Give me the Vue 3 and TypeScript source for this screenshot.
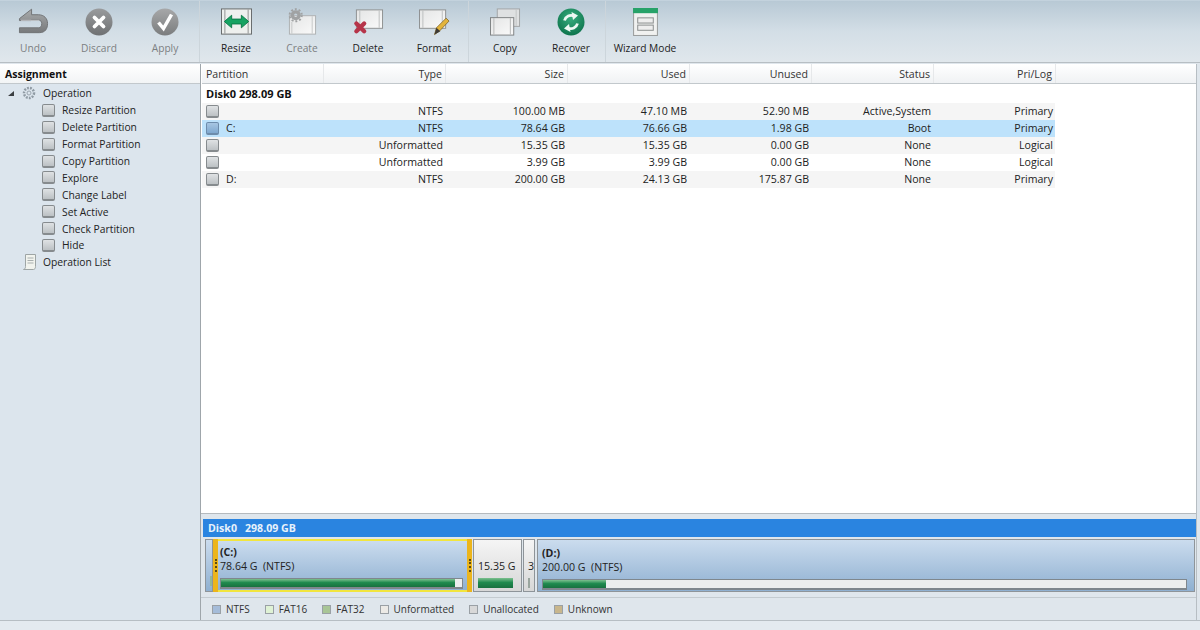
<script setup lang="ts">
const ops: string[] = ['Resize Partition','Delete Partition','Format Partition','Copy Partition','Explore','Change Label','Set Active','Check Partition','Hide']
const cols: string[] = ['Partition','Type','Size','Used','Unused','Status','Pri/Log']
const rows: { n: string; c: string[]; sel?: boolean }[] = [
  { n: '', c: ['NTFS','100.00 MB','47.10 MB','52.90 MB','Active,System','Primary'] },
  { n: 'C:', c: ['NTFS','78.64 GB','76.66 GB','1.98 GB','Boot','Primary'], sel: true },
  { n: '', c: ['Unformatted','15.35 GB','15.35 GB','0.00 GB','None','Logical'] },
  { n: '', c: ['Unformatted','3.99 GB','3.99 GB','0.00 GB','None','Logical'] },
  { n: 'D:', c: ['NTFS','200.00 GB','24.13 GB','175.87 GB','None','Primary'] },
]
const legend: { t: string; k: string }[] = [
  { t: 'NTFS', k: 'l1' },{ t: 'FAT16', k: 'l2' },{ t: 'FAT32', k: 'l3' },
  { t: 'Unformatted', k: 'l4' },{ t: 'Unallocated', k: 'l5' },{ t: 'Unknown', k: 'l6' },
]
</script>

<template>
  <div class="app">
    <header class="toolbar">
      <svg width="0" height="0" class="defs">
        <defs>
          <linearGradient id="gGrey" x1="0" y1="0" x2="0" y2="1"><stop offset="0" stop-color="#a9abac"/><stop offset="1" stop-color="#77797b"/></linearGradient>
          <linearGradient id="gDisc" x1="0" y1="0" x2="0" y2="1"><stop offset="0" stop-color="#999b9d"/><stop offset="1" stop-color="#6f7173"/></linearGradient>
          <linearGradient id="gAppl" x1="0" y1="0" x2="0" y2="1"><stop offset="0" stop-color="#a7a8a9"/><stop offset="1" stop-color="#7b7d7e"/></linearGradient>
          <radialGradient id="gRec" cx=".5" cy=".35" r=".7"><stop offset="0" stop-color="#38ad7e"/><stop offset="1" stop-color="#0b7049"/></radialGradient>
          <linearGradient id="gPanel" x1="0" y1="0" x2="1" y2="1"><stop offset="0" stop-color="#e4e5e5"/><stop offset="1" stop-color="#fafafa"/></linearGradient>
        </defs>
      </svg>
      <div class="group g1">
        <div class="tool off">
          <svg viewBox="0 0 32 28" class="ic w"><path d="M1.500 10.500 14 .8v5.700h7c6 0 9.500 4 9.500 9s-2 9.500-8.500 9.500H1.500v-5H21c2.500 0 3.500-1.800 3.500-4.500 0-2-1-3.500-3.500-3.500H14l-1 .5H1.500z" fill="url(#gGrey)" stroke="#717375"/><path d="M3 12.300h19" stroke="#c2c5c7"/></svg>
          <span>Undo</span>
        </div>
        <div class="tool off">
          <svg viewBox="0 0 28 28" class="ic"><circle cx="14" cy="14" r="13.500" fill="url(#gDisc)"/><path d="m9.500 9.500 9 9m0-9-9 9" stroke="#fff" stroke-width="3.800" stroke-linecap="round"/></svg>
          <span>Discard</span>
        </div>
        <div class="tool off">
          <svg viewBox="0 0 28 28" class="ic"><circle cx="14" cy="14" r="13.500" fill="url(#gAppl)"/><path d="m7.500 14.500 5 6 8-14" fill="none" stroke="#fff" stroke-width="3.500"/></svg>
          <span>Apply</span>
        </div>
      </div>
      <div class="group g2">
        <div class="tool">
          <svg viewBox="0 0 32 28" class="ic w"><rect x=".5" y=".5" width="31" height="26" fill="#eef0ee" stroke="#676a6b"/><path d="M4 1v25M28 1v25" stroke="#8f9292"/><path d="M3.500 13.500 11 7v4h10V7l7.500 6.500L21 20v-4H11v4z" fill="#17a362" stroke="#0d7a48"/></svg>
          <span>Resize</span>
        </div>
        <div class="tool off">
          <svg viewBox="0 0 32 28" class="ic w"><rect x="2.500" y="7.500" width="27" height="19" fill="url(#gPanel)" stroke="#aeb1b2"/><path d="M26 8v18M5 14v12" stroke="#c5c7c7"/><circle cx="9" cy="7" r="3.500" fill="none" stroke="#a0a2a3" stroke-width="3.500"/><circle cx="9" cy="7" r="6.300" fill="none" stroke="#a0a2a3" stroke-width="2" stroke-dasharray="2 2"/></svg>
          <span>Create</span>
        </div>
        <div class="tool">
          <svg viewBox="0 0 32 28" class="ic w"><rect x="3.500" y="1.500" width="27" height="19" fill="url(#gPanel)" stroke="#8e9091"/><path d="M27 2v18M7 2v18" stroke="#bcbebe"/><path d="m3.500 15.500 8 8m0-8-8 8" stroke="#b63449" stroke-width="4.500" stroke-linecap="round"/></svg>
          <span>Delete</span>
        </div>
        <div class="tool">
          <svg viewBox="0 0 32 28" class="ic w"><rect x=".5" y="1.500" width="27" height="19" fill="url(#gPanel)" stroke="#8e9091"/><path d="M24 2v18M4 2v18" stroke="#bcbebe"/><path d="m16 27 2-7 10-10 3 3-10 10.500z" fill="#e3b43c" stroke="#7d6429" stroke-width=".8"/><path d="m16 27 2-7 4 3.500z" fill="#3d3a35"/></svg>
          <span>Format</span>
        </div>
      </div>
      <div class="group g3">
        <div class="tool">
          <svg viewBox="0 0 32 28" class="ic w"><rect x="7.500" y=".5" width="23" height="18" fill="#dfe1e2" stroke="#a2a5a6"/><rect x=".5" y="9.500" width="24" height="18" fill="url(#gPanel)" stroke="#7f8283"/><path d="M4 10v17M21 10v17" stroke="#b7b9b9"/><path d="M27 1v17" stroke="#c3c5c5"/></svg>
          <span>Copy</span>
        </div>
        <div class="tool">
          <svg viewBox="0 0 28 28" class="ic"><circle cx="14" cy="14" r="13.500" fill="url(#gRec)"/><g fill="none" stroke="#eef8f3" stroke-width="2.800"><path d="M7.500 12.500A6.800 6.800 0 0 1 17 8"/><path d="M20.500 15.500A6.800 6.800 0 0 1 11 20"/></g><path d="m14.500 4 6.500 3.500-5 4.500zM13.500 24 7 20.500l5-4.500z" fill="#eef8f3"/></svg>
          <span>Recover</span>
        </div>
      </div>
      <div class="group g4">
        <div class="tool wide">
          <svg viewBox="0 0 24 27" class="ic wz"><rect x=".5" y=".5" width="23" height="26" fill="#f0f1f0" stroke="#9b9e9e"/><rect x="0" y="0" width="24" height="5" fill="#27a269"/><rect x="4.500" y="9.500" width="15" height="5" fill="#eee" stroke="#8f9292"/><rect x="4.500" y="16.500" width="15" height="5" fill="#eee" stroke="#8f9292"/></svg>
          <span>Wizard Mode</span>
        </div>
      </div>
    </header>

    <div class="main">
      <aside class="side">
        <div class="side-head">Assignment</div>
        <div class="tree">
          <div class="node root">
            <span class="tri"></span>
            <svg viewBox="0 0 14 14" class="gear"><circle cx="7" cy="7" r="5" fill="none" stroke="#8f9aa3" stroke-width="2.500" stroke-dasharray="1.800 1.200"/><circle cx="7" cy="7" r="2" fill="none" stroke="#9aa4ad"/></svg>
            <span>Operation</span>
          </div>
          <div v-for="o in ops" :key="o" class="node child">
            <span class="box"></span><span>{{ o }}</span>
          </div>
          <div class="node root list">
            <svg viewBox="0 0 13 16" class="doc"><path d="M2.500.5h10v12c0 2-1 3-2 3H.5c1 0 2-1 2-3z" fill="#f1f3ee" stroke="#9ea5a5"/><path d="M4.500 4h6M4.500 6.500h6M4.500 9h6" stroke="#a9afaf"/></svg>
            <span>Operation List</span>
          </div>
        </div>
      </aside>

      <section class="content">
        <div class="table">
          <div class="thead">
            <div v-for="(c, i) in cols" :key="c" class="th" :class="{ first: i === 0 }">{{ c }}</div>
            <div class="th rest"></div>
          </div>
          <div class="disk-title">Disk0 298.09 GB</div>
          <div v-for="(r, i) in rows" :key="i" class="tr" :class="{ sel: r.sel, odd: i % 2 === 0 }">
            <div class="td first"><span class="box" :class="{ blue: r.sel }"></span><span>{{ r.n }}</span></div>
            <div v-for="(v, j) in r.c" :key="j" class="td">{{ v }}</div>
          </div>
        </div>

        <div class="map">
          <div class="disk-bar"><b>Disk0</b><b>298.09 GB</b></div>
          <div class="strip">
            <div class="part ntfs p0"><span class="m thin"></span></div>
            <div class="part ntfs pc">
              <span class="grip"></span><span class="grip r"></span>
              <b>(C:)</b>
              <span class="inf">78.64 G&nbsp; (NTFS)</span>
              <span class="m"><i class="fill" style="width:97%"></i></span>
            </div>
            <div class="part unf p1">
              <span class="inf">15.35 G</span>
              <span class="m flat"><i class="fill" style="width:100%"></i></span>
            </div>
            <div class="part unf p2">
              <span class="inf">3</span>
              <span class="m flat"><i class="fill grey" style="width:2px"></i></span>
            </div>
            <div class="part ntfs pd">
              <b>(D:)</b>
              <span class="inf">200.00 G&nbsp; (NTFS)</span>
              <span class="m"><i class="fill" style="width:9.800%"></i></span>
            </div>
          </div>
          <div class="legend">
            <div v-for="l in legend" :key="l.t" class="lg">
              <span class="sw" :class="l.k"></span><span>{{ l.t }}</span>
            </div>
          </div>
        </div>
      </section>
    </div>
    <footer class="status"></footer>
  </div>
</template>

<style>
html, body { margin: 0; background: #dfe6ec; }
</style>

<style scoped>
.app {
  width: 1200px; height: 630px; overflow: hidden; display: flex; flex-direction: column;
  font: 10.600px/14px "Open Sans", "Noto Sans", sans-serif; color: #222; background: #dfe6ec;
}
.defs { position: absolute; }
.toolbar {
  height: 63px; box-sizing: border-box; flex: none; display: flex;
  background: linear-gradient(#b8c9d5, #d3dee6 50%, #e0e7ec);
  border-top: 1px solid #c3d2dd; border-bottom: 1px solid #b7bec3;
}
.group { display: flex; box-sizing: border-box; border-right: 1px solid #ccd5db; margin-right: 1px; padding-bottom: 1px; }
.g1 { width: 200px; }
.g2 { width: 268px; padding-left: 2px; }
.g3 { width: 136px; padding-left: 2px; }
.g4 { border: 0; padding-left: 4px; }
.tool { width: 66px; display: flex; flex-direction: column; align-items: center; padding-top: 7px; box-sizing: border-box; font-size: 10.200px; }
.tool.wide { width: 68px; }
.tool.off { color: #7c7f82; }
.tool span { margin-top: 6px; white-space: nowrap; line-height: 13px; }
.ic { width: 28px; height: 28px; display: block; }
.ic.w { width: 31px; height: 28px; }
.ic.wz { width: 25px; height: 28px; }

.main { flex: 1; display: flex; min-height: 0; padding-top: 1px; }
.side { width: 200px; flex: none; background: #dce5ed; border-right: 1px solid #9fa6ab; font-size: 10.300px; }
.side-head {
  height: 20px; line-height: 21px; padding-left: 5px; font-weight: 700; color: #111;
  background: linear-gradient(#fff, #f2f4f5); border-bottom: 1px solid #c2c8cc; box-sizing: border-box; font-size: 10.500px;
}
.tree { padding-top: 1px; }
.node { height: 16.900px; display: flex; align-items: center; white-space: nowrap; }
.root span:last-child { margin-left: 7px; }
.root { padding-left: 8px; }
.tri { width: 0; height: 0; border-style: solid; border-width: 0 0 5px 6px; border-color: transparent transparent #3b3f42 transparent; margin-right: 8px; }
.gear { width: 14px; height: 14px; }
.list { padding-left: 23px; }
.doc { width: 13px; height: 16px; }
.child { padding-left: 42px; }
.child .box { margin-right: 7px; }
.box {
  width: 13px; height: 13px; flex: none; box-sizing: border-box; border-radius: 2px;
  border: 1px solid #868b8e; border-bottom-width: 2px; background: linear-gradient(#dfe2e4, #bcc1c4);
}
.box.blue { background: linear-gradient(#a7c6e2, #7fa8cf); border-color: #6d8cab; }

.content { flex: 1; min-width: 0; display: flex; flex-direction: column; background: #fff; margin-right: 3px; border-right: 1px solid #b7bec3; }
.table { flex: 1; }
.thead { display: flex; height: 20px; background: linear-gradient(#fff, #f0f2f4); border-bottom: 1px solid #c2c8cc; box-sizing: border-box; margin-left: 1px; }
.th { width: 122px; box-sizing: border-box; flex: none; text-align: right; padding-right: 3px; line-height: 21px; border-right: 1px solid #e6e8ea; color: #333; }
.th.first { text-align: left; padding-left: 4px; }
.th.rest { flex: 1; border: 0; }
.disk-title { height: 19px; line-height: 20px; padding-left: 5px; font-weight: 700; color: #111; font-size: 11px; }
.tr { display: flex; height: 17px; width: 853px; margin-left: 1px; }
.tr.odd { background: #f5f5f5; }
.tr.sel { background: #bde2fb; }
.td { width: 122px; flex: none; text-align: right; padding-right: 3px; box-sizing: border-box; line-height: 17px; white-space: nowrap; }
.td.first { text-align: left; padding-left: 4px; display: flex; align-items: center; gap: 7px; padding-right: 0; }

.map { height: 107px; flex: none; box-sizing: border-box; background: #dfe6ec; border-top: 1px solid #b5babe; padding-top: 5px; }
.disk-bar { margin-left: 2px; height: 18px; line-height: 18px; background: #2a84e0; color: #e8f2fb; padding-left: 5px; display: flex; gap: 8px; }
.strip { display: flex; height: 53px; margin: 2px 0 0 4px; gap: 1px; }
.part { box-sizing: border-box; flex: none; display: flex; flex-direction: column; position: relative; border: 1px solid #8e9499; padding: 7px 4px 0; white-space: nowrap; }
.ntfs { background: linear-gradient(#cbdcee, #8fb0d1); }
.unf { background: linear-gradient(#f5f5f5, #d7d7d7); }
.part b { line-height: 13px; color: #222; }
.inf { line-height: 13px; margin-top: 1px; }
.p0 { width: 8px; padding: 0; margin-right: -1px; }
.m.thin { width: 2px; margin: 36px 0 0 4px; border: 0; height: 10px; background: #8fb79a; }
.pc { width: 259px; border: 2px solid #f2e53e; padding: 5px 7px 0 5px; }
.grip { position: absolute; left: -2px; top: -2px; bottom: -2px; width: 5px; background: #ecb51c; display: flex; align-items: center; justify-content: center; }
.grip::after { content: ""; height: 13px; border-left: 2px dotted #5e4a12; }
.grip.r { left: auto; right: -2px; }
.p1 { width: 49px; padding: 19px 8px 0 4px; }
.p2 { width: 12px; padding: 19px 0 0 4px; margin-right: 1px; }
.pd { width: 658px; padding-left: 4px; padding-right: 7px; }
.m { display: block; height: 11px; margin-top: 5px; background: #eceeee; border: 1px solid #7f878d; border-bottom-width: 2px; box-sizing: border-box; }
.m.flat { border: 0; background: transparent; height: 10px; }
.fill { display: block; height: 100%; background: linear-gradient(#7dc08f, #1f8a4e 45%, #19713f); }
.fill.grey { background: #9aa59e; }
.legend { display: flex; height: 23px; align-items: center; padding-left: 11px; margin-top: 5px; border-top: 1px solid #c4cbd0; box-sizing: border-box; color: #333; font-size: 10px; }
.lg { display: flex; align-items: center; gap: 5px; margin-right: 15px; }
.sw { width: 9px; height: 9px; box-sizing: border-box; border: 1px solid #9aa0a5; }
.l1 { background: #a5bcd9; }
.l2 { background: #dff2d5; }
.l3 { background: #a8c596; }
.l4 { background: #eceae6; }
.l5 { background: #d8d8d8; }
.l6 { background: #c8b68c; }
.status { height: 10px; flex: none; background: #e4eaef; border-top: 1px solid #b7bec3; box-sizing: border-box; }
</style>
